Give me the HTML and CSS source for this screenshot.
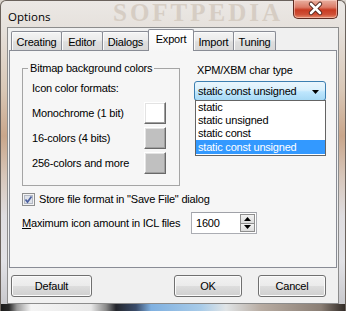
FILE: index.html
```html
<!DOCTYPE html>
<html>
<head>
<meta charset="utf-8">
<link rel="stylesheet" href="styles.css">
</head>
<body>
<div class="window">
  <div class="titlebar">
    <span class="title">Options</span>
    <span class="watermark">SOFTPEDIA</span>
    <div class="close">
      <svg width="45" height="19" viewBox="0 0 45 19">
        <path d="M18 5 L27 14 M27 5 L18 14" stroke="#4a2018" stroke-width="4.5" stroke-linecap="round"/>
        <path d="M18 5 L27 14 M27 5 L18 14" stroke="#ffffff" stroke-width="2.6" stroke-linecap="round"/>
      </svg>
    </div>
  </div>
  <div class="client">
    <div class="tabs">
      <div class="tab w-creating">Creating</div>
      <div class="tab w-editor">Editor</div>
      <div class="tab w-dialogs">Dialogs</div>
      <div class="tab active w-export">Export</div>
      <div class="tab w-import">Import</div>
      <div class="tab w-tuning">Tuning</div>
    </div>
    <div class="panel">
      <div class="top">
        <fieldset class="group">
          <legend>Bitmap background colors</legend>
          <div class="formats">Icon color formats:</div>
          <div class="crow"><span>Monochrome (1 bit)</span><span class="swatch white"></span></div>
          <div class="crow"><span>16-colors (4 bits)</span><span class="swatch"></span></div>
          <div class="crow"><span>256-colors and more</span><span class="swatch"></span></div>
        </fieldset>
        <div class="xpm">
          <div class="xlabel">XPM/XBM char type</div>
          <div class="combo-wrap">
            <div class="combo">
              <span>static const unsigned</span>
              <svg class="arrow" width="7" height="4" viewBox="0 0 7 4"><path d="M0 0 H7 L3.5 4 Z" fill="#000"/></svg>
            </div>
            <div class="dropdown">
              <div class="item">static</div>
              <div class="item">static unsigned</div>
              <div class="item">static const</div>
              <div class="item sel">static const unsigned</div>
            </div>
          </div>
        </div>
      </div>
      <div class="check">
        <span class="cbox">
          <svg width="13" height="13" viewBox="0 0 13 13">
            <rect x="0.5" y="0.5" width="12" height="12" fill="#f4f4f4" stroke="#8e8f8f"/>
            <rect x="2.5" y="2.5" width="8" height="8" fill="#dfe3ea" stroke="#b4b9c4"/>
            <path d="M3.5 6.5 L5.5 9 L9.5 3.5" stroke="#4c61a0" stroke-width="1.7" fill="none"/>
          </svg>
        </span>
        <span>Store file format in "Save File" dialog</span>
      </div>
      <div class="maxrow">
        <span class="maxlabel"><u>M</u>aximum icon amount in ICL files</span>
        <div class="spin">
          <span class="spinval">1600</span>
          <div class="spinbtns">
            <div class="sb"><svg width="7" height="4" viewBox="0 0 7 4"><path d="M0 4 H7 L3.5 0 Z" fill="#000"/></svg></div>
            <div class="sb"><svg width="7" height="4" viewBox="0 0 7 4"><path d="M0 0 H7 L3.5 4 Z" fill="#000"/></svg></div>
          </div>
        </div>
      </div>
    </div>
    <div class="buttons">
      <div class="btn w-default">Default</div>
      <div class="btn-group">
        <div class="btn w-ok">OK</div>
        <div class="btn w-cancel">Cancel</div>
      </div>
    </div>
  </div>
  <div class="bottomframe"></div>
</div>
</body>
</html>
```
FILE: styles.css
```css
* { box-sizing: border-box; }
html, body { margin: 0; padding: 0; }
body {
  width: 346px;
  height: 311px;
  overflow: hidden;
  font-family: "Liberation Sans", Arial, sans-serif;
  font-size: 11px;
  letter-spacing: -0.2px;
  color: #000;
  background: #d9d3cc;
}
.window {
  width: 346px;
  height: 311px;
  display: flex;
  flex-direction: column;
  border-radius: 6px 6px 0 0;
  background: linear-gradient(to bottom, #ebe8e5 0px, #e6e1dc 27px, #d9c7b6 90px, #c9a68b 135px, #d7c6ba 175px, #dfdde0 215px, #e2e2e6 260px, #c8c8cc 304px);
  border: 1px solid #6a625c;
  border-bottom: none;
}
.titlebar {
  position: relative;
  height: 26px;
  display: flex;
  align-items: flex-start;
  padding-left: 7px;
  padding-right: 7px;
  flex-shrink: 0;
}
.title {
  margin-top: 8px;
  font-family: "Open Sans", "Liberation Sans", sans-serif;
  font-size: 11.5px;
  letter-spacing: 0;
  color: #000;
  position: relative;
  z-index: 2;
}
.watermark {
  position: absolute;
  left: 112px;
  top: 0;
  line-height: 24px;
  font-family: "Liberation Serif", serif;
  font-weight: bold;
  font-size: 25px;
  letter-spacing: 3px;
  color: #d2c8bd;
  opacity: 0.8;
  z-index: 1;
}
.close {
  margin-left: auto;
  margin-top: -1px;
  width: 45px;
  height: 19px;
  border: 1px solid #5e2b22;
  border-top: none;
  border-radius: 0 0 5px 5px;
  background: linear-gradient(to bottom, #e9b0a0 0%, #dc7c68 40%, #c83b22 55%, #cf4f36 80%, #e68d6e 100%);
  box-shadow: inset 0 0 0 1px rgba(255,220,210,0.5);
  position: relative;
  z-index: 2;
}
.close svg { display: block; margin: -1px 0 0 -1px; }
.client {
  margin: 0 6px;
  height: 277px;
  background: #f0f0f0;
  border: 1px solid #8c8c8c;
  display: flex;
  flex-direction: column;
}
.tabs {
  display: flex;
  align-items: flex-end;
  height: 22px;
  padding-left: 3px;
  position: relative;
  z-index: 2;
}
.tab {
  height: 19px;
  border: 1px solid #898c95;
  border-bottom: none;
  border-radius: 2px 2px 0 0;
  background: linear-gradient(to bottom, #f4f4f4 0%, #ebebeb 45%, #dedede 55%, #d8d8d8 100%);
  box-shadow: inset 1px 1px 0 #fbfbfb;
  text-align: center;
  line-height: 18px;
  padding-top: 1px;
  margin-right: -1px;
}
.tab.active {
  height: 22px;
  margin-bottom: -1px;
  background: linear-gradient(to bottom, #ffffff 0%, #fbfbfb 60%, #f6f6f6 100%);
  box-shadow: none;
  line-height: 18px;
  padding-top: 0;
  position: relative;
  z-index: 3;
}
.w-creating { width: 51px; }
.w-editor { width: 42px; }
.w-dialogs { width: 47px; }
.w-export { width: 46px; }
.w-import { width: 41px; }
.w-tuning { width: 43px; }
.panel {
  margin-left: 1px;
  width: 328px;
  height: 218px;
  border: 1px solid #898c95;
  background: #f6f6f6;
  position: relative;
}
.top {
  display: flex;
  align-items: flex-start;
}
.group {
  margin: 11px 0 0 12px;
  width: 158px;
  height: 124px;
  border: 1px solid #a5a5a5;
  padding: 0 13px 0 9px;
  min-inline-size: 0;
}
.group legend {
  margin-left: -4px;
  padding: 0 2px;
  line-height: 13px;
}
.formats {
  margin-top: 7px;
  line-height: 13px;
}
.crow {
  display: flex;
  justify-content: space-between;
  align-items: center;
  height: 22px;
  margin-top: 3px;
}
.formats + .crow { margin-top: 7px; }
.swatch {
  width: 22px;
  height: 22px;
  background: #c0c0c0;
  border: 1px solid;
  border-color: #ffffff #696969 #696969 #ffffff;
  box-shadow: inset -1px -1px 0 #a0a0a0, inset 1px 1px 0 #e3e3e3;
}
.swatch.white { background: #ffffff; }
.xpm {
  margin: 13px 0 0 14px;
  width: 132px;
}
.xlabel { line-height: 13px; padding-left: 3px; }
.combo-wrap { position: relative; margin-top: 4px; }
.combo {
  height: 20px;
  border: 1px solid #3c7fb1;
  border-radius: 3px;
  background: linear-gradient(to bottom, #eaf6fd 0%, #d9f0fc 45%, #bee6fd 55%, #a7d9f5 100%);
  display: flex;
  align-items: center;
  padding-left: 3px;
  padding-right: 6px;
  justify-content: space-between;
  line-height: 13px;
}
.arrow { display: block; margin-top: 1px; }
.dropdown {
  position: absolute;
  left: 1px;
  top: 19px;
  width: 131px;
  height: 56px;
  background: #ffffff;
  border: 1px solid #646464;
  z-index: 5;
}
.item {
  height: 13px;
  line-height: 13px;
  padding-left: 2px;
}
.item.sel {
  height: 14px;
  line-height: 14px;
  background: #3399ff;
  color: #ffffff;
}
.check {
  display: flex;
  align-items: center;
  margin: 7px 0 0 12px;
  height: 13px;
  line-height: 13px;
}
.cbox { width: 13px; height: 13px; margin-right: 4px; }
.cbox svg { display: block; }
.maxrow {
  display: flex;
  align-items: center;
  margin: 6px 0 0 12px;
  height: 22px;
}
.maxlabel { width: 169px; }
.spin {
  width: 66px;
  height: 22px;
  border: 1px solid #abadb3;
  border-top-color: #a0a2a8;
  background: #ffffff;
  display: flex;
  align-items: center;
  justify-content: space-between;
  padding: 0 1px 0 4px;
}
.spinbtns {
  display: flex;
  flex-direction: column;
  width: 15px;
  height: 18px;
}
.sb {
  flex: 1;
  border: 1px solid #8e8e8e;
  background: linear-gradient(to bottom, #f2f2f2, #dcdcdc);
  display: flex;
  align-items: center;
  justify-content: center;
}
.sb + .sb { border-top: none; }
.sb svg { display: block; }
.buttons {
  display: flex;
  justify-content: space-between;
  margin-top: 7px;
  padding: 0 12px 0 3px;
}
.btn-group { display: flex; gap: 16px; }
.btn {
  height: 22px;
  border: 1px solid #707070;
  border-radius: 3px;
  background: linear-gradient(to bottom, #f2f2f2 0%, #ebebeb 48%, #dddddd 52%, #cfcfcf 100%);
  box-shadow: inset 0 0 0 1px #fbfbfb;
  text-align: center;
  line-height: 20px;
}
.w-default { width: 81px; }
.w-ok { width: 68px; }
.w-cancel { width: 68px; }
.bottomframe {
  flex: 1;
  background: linear-gradient(to right, #1a1a1a 0px, #2a2a2a 8px, #9a9a9a 16px, #f4f4f4 30px, #e8e8e8 90px, #8a8a8a 105px, #24262c 115px, #3a4c6a 135px, #7fb0e0 150px, #a8cbe8 200px, #e0e4e6 225px, #b8aca2 260px, #8a7e74 320px, #2a2420 346px);
}
```
